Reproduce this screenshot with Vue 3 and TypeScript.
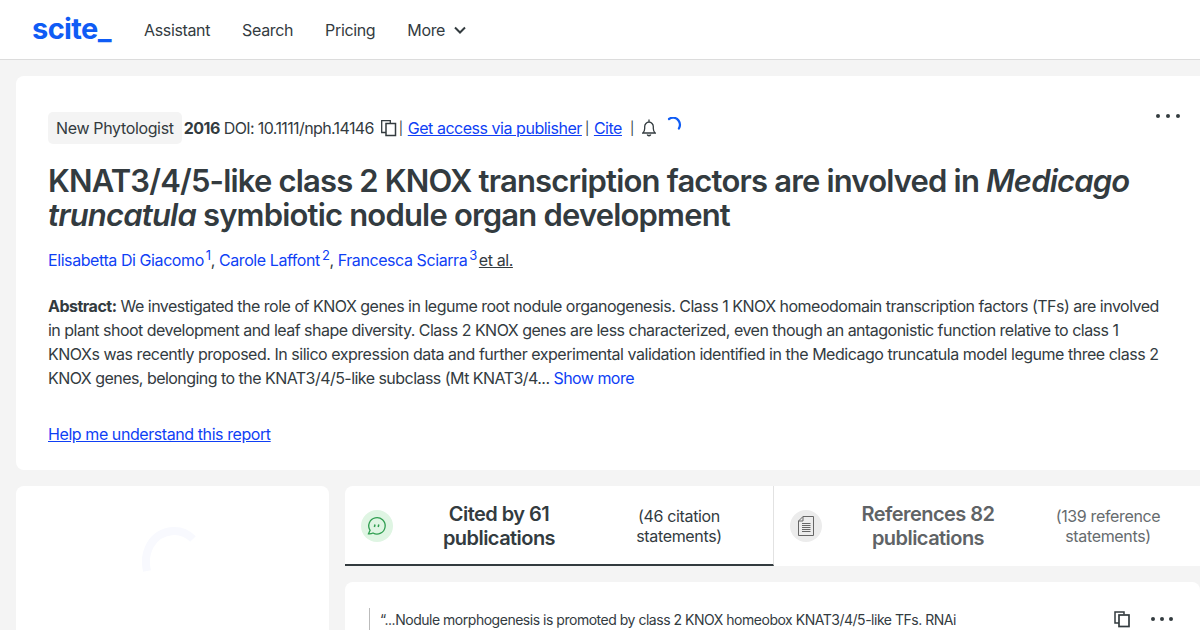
<script setup lang="ts">
const navItems: string[] = ['Assistant', 'Search', 'Pricing']
</script>

<template>
  <div class="page">
    <header class="topbar">
      <span class="logo">scite_</span>
      <nav class="nav">
        <a v-for="n in navItems" :key="n" class="nav-item">{{ n }}</a>
        <a class="nav-item more">More
          <svg width="14" height="14" viewBox="0 0 14 14" fill="none" stroke="#333b3f" stroke-width="2"><path d="M2 4.5l5 5 5-5" /></svg>
        </a>
      </nav>
    </header>

    <main class="main">
      <section class="card report">
        <button class="dots top-dots" aria-label="more"><i /><i /><i /></button>
        <div class="meta">
          <span class="journal">New Phytologist</span>
          <b class="year">2016</b>
          <span class="doi">DOI: 10.1111/nph.14146</span>
          <svg class="copy" width="18" height="18" viewBox="0 0 18 18" fill="none" stroke="#333b3f" stroke-width="1.3"><path d="M6 13.500H1.700V1.700h8.600V4" /><rect x="6" y="4.500" width="9.500" height="12" stroke-width="1.500" /></svg>
          <span class="sep sep-first">|</span>
          <a class="link">Get access via publisher</a>
          <span class="sep sep-mid">|</span>
          <a class="link">Cite</a>
          <span class="sep sep-wide">|</span>
          <svg class="bell" width="14" height="18" viewBox="0 0 14 18" fill="none" stroke="#333b3f" stroke-width="1.300"><path d="M.8 14c1.500-1.300 1.900-2.600 1.900-4.500V7.500a4.300 4.300 0 0 1 8.600 0v2c0 1.900.4 3.200 1.900 4.500z" /><path d="M5.300 15.500a1.800 1.800 0 0 0 3.400 0" stroke-width="1.500" /><path d="M7 .5v2.500" /></svg>
          <svg class="spin" width="16" height="16" viewBox="0 0 16 16" fill="none" stroke="#0f5cf5" stroke-width="2.200" stroke-linecap="round"><path d="M2 2a6.700 6.700 0 0 1 9.500 1.500c1.800 2.500 1.800 5.500.4 8" /></svg>
        </div>
        <h1 class="title">KNAT3/4/5-like class 2 KNOX transcription factors are involved in <em>Medicago</em><br /><em>truncatula</em> symbiotic nodule organ development</h1>
        <p class="authors">
          <a class="author">Elisabetta Di Giacomo</a><sup>1</sup>, <a class="author">Carole Laffont</a><sup>2</sup>, <a class="author">Francesca Sciarra</a><sup>3</sup>
          <u class="etal">et al.</u>
        </p>
        <p class="abstract">
          <span class="l1"><b>Abstract:</b> We investigated the role of KNOX genes in legume root nodule organogenesis. Class 1 KNOX homeodomain transcription factors (TFs) are involved</span>
          <span class="l2">in plant shoot development and leaf shape diversity. Class 2 KNOX genes are less characterized, even though an antagonistic function relative to class 1</span>
          <span class="l3">KNOXs was recently proposed. In silico expression data and further experimental validation identified in the Medicago truncatula model legume three class 2</span>
          <span class="l4">KNOX genes, belonging to the KNAT3/4/5-like subclass (Mt KNAT3/4... <a class="author">Show more</a></span>
        </p>
        <a class="link help">Help me understand this report</a>
      </section>

      <div class="lower">
        <aside class="card side">
          <svg width="64" height="64" viewBox="0 0 64 64" fill="none" stroke="#f8f9fe" stroke-width="8" class="side-spin"><path d="M6 48C2 30 10 10 32 8c9-.5 15 3 20 8" /></svg>
        </aside>
        <div class="content">
          <div class="tabs">
            <div class="tab active">
              <span class="tab-icon green">
                <svg width="22" height="22" viewBox="0 0 22 22" fill="none" stroke="#2f9e50" stroke-width="1.300"><path d="M2.500 18.800l1.600-3.500A8.200 8.200 0 1 1 7 18a8 8 0 0 1-4.500.8z" /><path d="M9 9.500l-.6 2.500M12.800 9.500l-.6 2.500" stroke-width="1.500" /></svg>
              </span>
              <strong class="tab-title">Cited by 61<br />publications</strong>
              <span class="tab-sub">(46 citation<br />statements)</span>
            </div>
            <div class="tab">
              <span class="tab-icon grey">
                <svg width="16" height="20" viewBox="0 0 16 20" fill="none" stroke="#666" stroke-width="1"><path d="M5 .5h10.500v19H.5V5z" /><path d="M5 .5V5H.5M4 7.500h8.500M4 9.500h8.500M4 11.500h8.500M4 13.500h8.500M4 15.500h8.500" /></svg>
              </span>
              <strong class="tab-title muted">References 82<br />publications</strong>
              <span class="tab-sub muted-sub">(139 reference<br />statements)</span>
            </div>
          </div>
          <article class="card quote-card">
            <blockquote class="quote">“...Nodule morphogenesis is promoted by class 2 KNOX homeobox KNAT3/4/5-like TFs. RNAi</blockquote>
            <div class="quote-actions">
              <svg width="18" height="18" viewBox="0 0 18 18" fill="none" stroke="#333b3f" stroke-width="1.500"><path d="M6 13H2V2h9v2.500" /><rect x="6" y="5" width="10" height="11.500" stroke-width="1.700" /></svg>
              <button class="dots tight" aria-label="more"><i /><i /><i /></button>
            </div>
          </article>
        </div>
      </div>
    </main>
  </div>
</template>

<style>
html, body { margin: 0; background: #f4f4f4; overflow: hidden; }
</style>

<style scoped>
.page {
  width: 1200px;
  height: 630px;
  overflow: hidden;
  font-family: Inter, "Liberation Sans", sans-serif;
  color: #333b3f;
  font-size: 16px;
  letter-spacing: -0.35px;
}
.topbar {
  height: 59px;
  display: flex;
  align-items: center;
  padding-left: 32px;
  background: #fff;
  border-bottom: 1px solid #dcdcdc;
}
.logo {
  width: 112px;
  color: #0f5cf5;
  font-size: 29px;
  font-weight: 700;
  letter-spacing: -0.6px;
  position: relative;
  top: -1px;
}
.nav { display: flex; gap: 32px; }
.nav-item { display: flex; align-items: center; gap: 8px; color: #333b3f; }
.main {
  padding: 16px 0 0 16px;
  display: flex;
  flex-direction: column;
  gap: 16px;
}
.card { background: #fff; border-radius: 8px; }
.report {
  position: relative;
  width: 1200px;
  height: 394px;
  padding: 36px 32px 0;
  box-sizing: border-box;
}
.dots { display: flex; gap: 6px; padding: 0; border: 0; background: none; }
.dots i { width: 4px; height: 4px; border-radius: 50%; background: #333b3f; }
.dots.tight { gap: 5px; }
.top-dots { position: absolute; top: 38px; left: 1140px; }
.meta { display: flex; align-items: center; height: 32px; }
.journal {
  background: #f4f4f4;
  border-radius: 5px;
  padding: 0 8px;
  height: 32px;
  line-height: 32px;
  margin-right: 2px;
}
.year { font-weight: 700; margin-right: 4px; letter-spacing: -0.5px; }
.doi { margin-right: 6px; letter-spacing: -0.62px; }
.copy { margin-right: 0; }
.sep { font-size: 13px; line-height: 16px; }
.sep-first { margin: 0 5px 0 1px; }
.sep-mid { margin: 0 5px 0 3px; }
.sep-wide { margin: 0 8px 0 8px; }
.link { color: #0f3ff5; text-decoration: underline; letter-spacing: -0.47px; }
.spin { margin-left: 11px; margin-top: -6px; }
.title {
  margin: 20px 0 0;
  font-size: 31px;
  line-height: 34px;
  font-weight: 600;
  letter-spacing: -0.82px;
}
.authors { margin: 16px 0 0; line-height: 24px; letter-spacing: -0.42px; }
.author { color: #0f3ff5; }
.authors sup { font-size: 13px; line-height: 0; margin-left: 2px; color: #0f3ff5; }
.etal { margin-left: 2px; }
.abstract { margin: 22px 0 0; line-height: 24px; }
.abstract span { display: block; white-space: nowrap; }
.abstract .l1 { letter-spacing: -0.505px; }
.abstract .l2 { letter-spacing: -0.515px; }
.abstract .l3 { letter-spacing: -0.477px; }
.abstract .l4 { letter-spacing: -0.54px; }
.abstract b { font-weight: 700; }
.help { display: block; margin-top: 32px; line-height: 24px; letter-spacing: -0.42px; }
.lower { display: flex; gap: 16px; }
.side {
  width: 313px;
  height: 300px;
  flex: none;
  position: relative;
}
.side-spin { position: absolute; left: 125px; top: 37px; }
.content { width: 855px; flex: none; }
.tabs { display: flex; height: 80px; background: #fff; border-radius: 8px 0 0 0; }
.tab {
  flex: 1;
  display: grid;
  grid-template-columns: 32px 212px 148px;
  align-items: center;
  padding: 2px 0 0 16px;
  box-sizing: border-box;
  text-align: center;
  border-bottom: 2px solid transparent;
}
.tab.active { border-bottom-color: #333b3f; flex: none; width: 429px; border-right: 1px solid #e2e2e2; }
.tab-icon {
  width: 32px;
  height: 32px;
  border-radius: 50%;
  display: flex;
  align-items: center;
  justify-content: center;
}
.green { background: #dff5e3; }
.grey { background: #ececec; }
.tab-title { font-size: 20px; line-height: 24px; font-weight: 600; letter-spacing: -0.55px; }
.tab-sub { line-height: 20px; }
.muted { color: #5f6366; }
.muted-sub { color: #666b6e; }
.quote-card {
  margin-top: 16px;
  height: 200px;
  padding: 26px 24px 0;
  position: relative;
}
.quote {
  margin: 0;
  font-size: 14px;
  line-height: 24px;
  padding-left: 10px;
  border-left: 1px solid #bbb;
  letter-spacing: -0.48px;
}
.quote-actions {
  position: absolute;
  top: 28px;
  left: 768px;
  display: flex;
  align-items: center;
  gap: 20px;
}
</style>
